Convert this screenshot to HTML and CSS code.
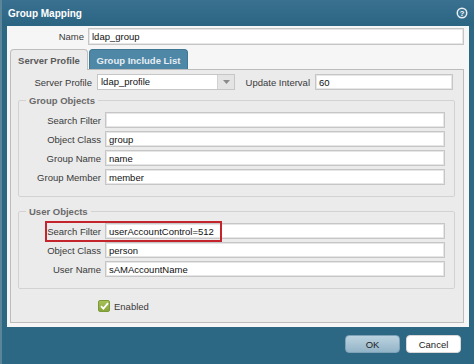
FILE: index.html
```html
<!DOCTYPE html>
<html lang="en">
<head>
    <meta charset="UTF-8">
    <title>Group Mapping</title>
    <link rel="stylesheet" href="styles.css">
</head>
<body>
    <div class="dialog">
        <div class="titlebar">
            <span class="title">Group Mapping</span>
            <svg class="help" width="12" height="12" viewBox="0 0 12 12">
                <circle cx="6" cy="6" r="5.5" fill="#e8eef2"/>
                <circle cx="6" cy="6" r="4" fill="#3d7593"/>
                <text x="6" y="8.6" text-anchor="middle" font-family="Liberation Sans, sans-serif" font-size="7.5" font-weight="bold" fill="#ffffff">?</text>
            </svg>
        </div>
        <div class="frame">
            <div class="row name-row">
                <label class="lbl name-lbl">Name</label>
                <input class="field" type="text" value="ldap_group">
            </div>
            <div class="tabs">
                <div class="tab active">Server Profile</div>
                <div class="tab">Group Include List</div>
            </div>
            <div class="panel">
                <div class="row profile-row">
                    <label class="lbl profile-lbl">Server Profile</label>
                    <div class="select">
                        <span class="select-text">ldap_profile</span>
                        <span class="select-btn">
                            <svg width="7" height="4" viewBox="0 0 7 4"><path d="M0 0h7L3.5 4z" fill="#8a8a8a"/></svg>
                        </span>
                    </div>
                    <label class="lbl interval-lbl">Update Interval</label>
                    <input class="field interval" type="text" value="60">
                </div>

                <fieldset class="group">
                    <legend>Group Objects</legend>
                    <div class="row">
                        <label class="lbl">Search Filter</label>
                        <input class="field" type="text" value="">
                    </div>
                    <div class="row">
                        <label class="lbl">Object Class</label>
                        <input class="field" type="text" value="group">
                    </div>
                    <div class="row">
                        <label class="lbl">Group Name</label>
                        <input class="field" type="text" value="name">
                    </div>
                    <div class="row">
                        <label class="lbl">Group Member</label>
                        <input class="field" type="text" value="member">
                    </div>
                </fieldset>

                <fieldset class="group user">
                    <legend>User Objects</legend>
                    <div class="row marked">
                        <label class="lbl">Search Filter</label>
                        <input class="field" type="text" value="userAccountControl=512">
                        <span class="highlight"></span>
                    </div>
                    <div class="row">
                        <label class="lbl">Object Class</label>
                        <input class="field" type="text" value="person">
                    </div>
                    <div class="row">
                        <label class="lbl">User Name</label>
                        <input class="field" type="text" value="sAMAccountName">
                    </div>
                </fieldset>

                <div class="enabled">
                    <span class="check">
                        <svg width="9" height="8" viewBox="0 0 9 8"><path d="M1 4.2l2.4 2.4L8 1.2" fill="none" stroke="#ffffff" stroke-width="1.8"/></svg>
                    </span>
                    <span>Enabled</span>
                </div>
            </div>
        </div>
        <div class="buttons">
            <button class="btn ok">OK</button>
            <button class="btn cancel">Cancel</button>
        </div>
    </div>
</body>
</html>
```

FILE: styles.css
```css
body {
    margin: 0;
    padding: 0;
    background-color: #2c6884;
    font-family: 'Liberation Sans', Arial, sans-serif;
    font-size: 9.5px;
    color: #333;
}
.dialog {
    width: 474px;
    height: 364px;
    box-sizing: border-box;
    border-left: 2px solid #5b8599;
    background-color: #2c6884;
}
.titlebar {
    height: 26px;
    display: flex;
    align-items: center;
    justify-content: space-between;
    padding: 0 6px 0 6px;
    background: linear-gradient(to bottom, #3a7090, #2b6582);
}
.title {
    color: #fff;
    font-weight: bold;
    font-size: 10px;
    padding-top: 1px;
}
.help {
    display: block;
}
.frame {
    margin-left: 5px;
    width: 462px;
    height: 301px;
    box-sizing: border-box;
    padding: 2px 5px 5px 3px;
    background-color: #f6f6f6;
}
.row {
    display: flex;
    align-items: center;
    height: 16px;
    margin-bottom: 3px;
}
.lbl {
    flex: none;
    text-align: right;
    color: #3a3a3a;
    padding-right: 4px;
    box-sizing: border-box;
}
.field {
    flex: 1;
    min-width: 0;
    height: 16px;
    box-sizing: border-box;
    border: 1px solid #c6c6c6;
    box-shadow: inset 0 0 0 1px #e6e6e6;
    background-color: #fff;
    font-family: 'Liberation Sans', Arial, sans-serif;
    font-size: 9.5px;
    color: #111;
    padding: 0 3px;
    margin: 0;
    outline: none;
}
.name-row {
    height: 17px;
    margin-bottom: 0;
}
.name-row .field {
    height: 17px;
}
.name-lbl {
    width: 78px;
}
.tabs {
    display: flex;
    margin-top: 4px;
    height: 20px;
    position: relative;
    z-index: 1;
}
.tab {
    box-sizing: border-box;
    height: 20px;
    padding: 5px 0 0 0;
    text-align: center;
    font-weight: bold;
    border: 1px solid #3f7794;
    border-bottom: none;
    border-radius: 4px 4px 0 0;
    background-color: #4f87a6;
    color: #e6eef3;
    width: 99px;
    margin-left: 1px;
}
.tab.active {
    width: 78px;
    margin-left: 0;
    height: 21px;
    border-color: #bdbdbd;
    background-color: #ebebeb;
    color: #5a5a5a;
}
.panel {
    height: 254px;
    box-sizing: border-box;
    border: 1px solid #bcbcbc;
    background-color: #ebebeb;
    padding-top: 4px;
}
.profile-row {
    margin-bottom: 0;
}
.profile-lbl {
    width: 86px;
    padding-right: 5px;
}
.select {
    flex: none;
    width: 138px;
    height: 16px;
    box-sizing: border-box;
    display: flex;
    border: 1px solid #c6c6c6;
    background-color: #fff;
}
.select-text {
    flex: 1;
    padding-left: 3px;
    line-height: 14px;
    color: #111;
}
.select-btn {
    width: 16px;
    display: flex;
    align-items: center;
    justify-content: center;
    background-color: #e4e4e4;
    border-left: 1px solid #d2d2d2;
}
.interval-lbl {
    width: 80px;
    padding-right: 5px;
}
.field.interval {
    flex: none;
    width: 138px;
}
.group {
    margin: 5px 8px 0 7px;
    padding: 6px 9px 8px 0;
    border: 1px solid #d2d2d2;
    border-radius: 2px;
}
.group legend {
    font-weight: bold;
    color: #6a6a6a;
    font-size: 9.5px;
    padding: 0 3px;
    margin-left: 7px;
}
.group .lbl {
    width: 86px;
}
.group.user {
    margin-top: 9px;
}
.marked {
    position: relative;
}
.highlight {
    position: absolute;
    left: 26px;
    top: -2px;
    width: 177px;
    height: 21px;
    box-sizing: border-box;
    border: 2px solid #c4252d;
}
.enabled {
    display: flex;
    align-items: center;
    margin: 11px 0 0 87px;
    color: #3a3a3a;
}
.check {
    width: 12px;
    height: 12px;
    box-sizing: border-box;
    border-radius: 2px;
    background: linear-gradient(to bottom, #a7c158, #86a53a);
    border: 1px solid #7d9a36;
    display: flex;
    align-items: center;
    justify-content: center;
    margin-right: 4px;
}
.buttons {
    display: flex;
    justify-content: flex-end;
    gap: 6px;
    padding: 8px 13px 0 0;
}
.btn {
    width: 55px;
    height: 18px;
    border-radius: 4px;
    font-family: 'Liberation Sans', Arial, sans-serif;
    font-size: 9.5px;
    color: #222;
    padding: 0;
    cursor: pointer;
}
.btn.ok {
    border: 1px solid #7ea3b8;
    background: linear-gradient(to bottom, #bcd3e0, #93b4c7);
}
.btn.cancel {
    border: 1px solid #d8d8d8;
    background-color: #fff;
}
```
